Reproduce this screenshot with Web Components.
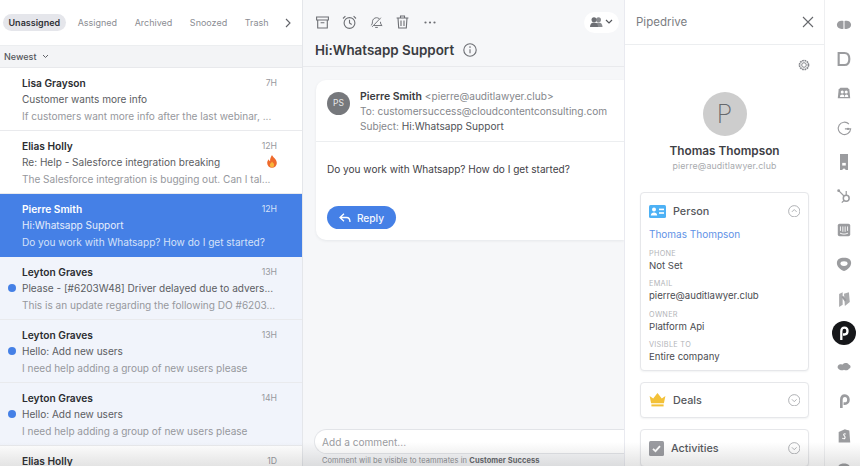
<!DOCTYPE html>
<html>
<head>
<meta charset="utf-8">
<style>
  html, body { margin: 0; height: 100%; overflow: hidden; }
  body { font-family: "Inter", "Liberation Sans", sans-serif; color: #3d3f44; }
</style>
</head>
<body>
<app-shell>
  <conv-list>
    <conv-item name="Lisa Grayson" time="7H" subject="Customer wants more info" preview="If customers want more info after the last webinar, ..."></conv-item>
    <conv-item name="Elias Holly" time="12H" subject="Re: Help - Salesforce integration breaking" preview="The Salesforce integration is bugging out. Can I tal..." fire></conv-item>
    <conv-item name="Pierre Smith" time="12H" subject="Hi:Whatsapp Support" preview="Do you work with Whatsapp? How do I get started?" selected></conv-item>
    <conv-item name="Leyton Graves" time="13H" subject="Please - [#6203W48] Driver delayed due to advers..." preview="This is an update regarding the following DO #6203..." unread></conv-item>
    <conv-item name="Leyton Graves" time="13H" subject="Hello: Add new users" preview="I need help adding a group of new users please" unread></conv-item>
    <conv-item name="Leyton Graves" time="14H" subject="Hello: Add new users" preview="I need help adding a group of new users please" unread></conv-item>
    <conv-item name="Elias Holly" time="1D"></conv-item>
  </conv-list>
  <thread-pane></thread-pane>
  <crm-panel>
    <crm-card title="Person" open>
      <svg slot="icon" width="17" height="13" viewBox="0 0 17 13"><rect width="17" height="13" rx="1.5" fill="#4db1f5"/><circle cx="5" cy="4.6" r="2" fill="#fff"/><path d="M1.8 10.4c0-2 1.4-3 3.2-3s3.2 1 3.2 3z" fill="#fff"/><rect x="10" y="3.6" width="5" height="1.6" fill="#fff"/><rect x="10" y="7.2" width="5" height="1.6" fill="#fff"/></svg>
      <a class="person">Thomas Thompson</a>
      <crm-field label="PHONE">Not Set</crm-field>
      <crm-field label="EMAIL">pierre@auditlawyer.club</crm-field>
      <crm-field label="OWNER">Platform Api</crm-field>
      <crm-field label="VISIBLE TO">Entire company</crm-field>
    </crm-card>
    <crm-card title="Deals" short>
      <svg slot="icon" width="17" height="14" viewBox="0 0 17 14"><path d="M.6 3l3.6 2.6L8.5 0l4.3 5.6L16.4 3l-1.5 7.2H2.1z" fill="#f3c138"/><rect x="2.4" y="11.4" width="12.2" height="2" fill="#f3c138"/></svg>
    </crm-card>
    <crm-card title="Activities">
      <svg slot="icon" width="15" height="15" viewBox="0 0 15 15"><rect width="15" height="15" rx="1.5" fill="#9a9ba0"/><path d="M4 7.8l2.5 2.4L11 5.2" fill="none" stroke="#fff" stroke-width="1.8"/></svg>
    </crm-card>
  </crm-panel>
  <app-rail></app-rail>
</app-shell>

<script>
class AppShell extends HTMLElement {
  constructor() {
    super();
    this.attachShadow({ mode: "open" });
  }
  connectedCallback() {
    this.shadowRoot.innerHTML = `
    <style>
      :host {
        display: grid;
        grid-template-columns: 303px 321px 200px 36px;
        width: 860px;
        height: 466px;
        overflow: hidden;
        position: relative;
        background: #fff;
      }
      #shade {
        position: absolute;
        left: 0;
        right: 0;
        bottom: 0;
        height: 24px;
        pointer-events: none;
        background: linear-gradient(to bottom, rgba(60,60,60,0), rgba(60,60,60,.14));
      }
    </style>
    <slot></slot>
    <div id="shade"></div>
    `;
  }
}

class ConvList extends HTMLElement {
  constructor() {
    super();
    this.attachShadow({ mode: "open" });
  }
  connectedCallback() {
    this.shadowRoot.innerHTML = `
    <style>
      :host {
        display: flex;
        flex-direction: column;
        height: 466px;
        overflow: hidden;
        border-right: 1px solid #e4e6ea;
        box-sizing: border-box;
      }
      #tabs {
        display: flex;
        align-items: center;
        height: 45px;
        flex: none;
        padding: 0 0 0 3px;
        font-size: 9px;
        color: #8b8d93;
        box-sizing: border-box;
      }
      #tabs span { padding: 3px 6px; margin-right: 5.5px; white-space: nowrap; }
      #tabs .on {
        background: #e5e6eb;
        color: #2f3136;
        font-weight: 600;
        border-radius: 9px;
        padding: 3px 5.5px;
        margin-right: 6px;
      }
      #tabs svg { margin: 0 11px 0 auto; }
      #sort {
        display: flex;
        align-items: center;
        gap: 6px;
        height: 23px;
        flex: none;
        padding-left: 4px;
        box-sizing: border-box;
        background: #f3f4f6;
        border-top: 1px solid #eceef0;
        border-bottom: 1px solid #e8e9ec;
        font-size: 9px;
        font-weight: 500;
        color: #55575c;
      }
    </style>
    <div id="tabs">
      <span class="on">Unassigned</span><span>Assigned</span><span>Archived</span><span>Snoozed</span><span>Trash</span>
      <svg width="6" height="10" viewBox="0 0 6 10"><path d="M1 1l4 4-4 4" fill="none" stroke="#606268" stroke-width="1.1"/></svg>
    </div>
    <div id="sort">Newest
      <svg width="7" height="5" viewBox="0 0 7 5"><path d="M1 1l2.5 2.5L6 1" fill="none" stroke="#606268" stroke-width="1"/></svg>
    </div>
    <slot></slot>
    `;
  }
}

class ConvItem extends HTMLElement {
  constructor() {
    super();
    this.attachShadow({ mode: "open" });
  }
  connectedCallback() {
    const fire = this.hasAttribute("fire") ? `
      <svg id="fire" width="12" height="13" viewBox="0 0 12 13"><path d="M6 0c.6 2.3 4.800 3.600 4.800 8A4.800 4.800 0 0 1 1.200 8c0-1.800.8-3 1.800-3.800 0 1.100.4 1.800 1.100 2.100C3.900 4 4.800 1.800 6 0z" fill="#ee6a2c"/><path d="M6 6.500c.4 1.200 2.200 1.600 2.200 3.500a2.200 2.200 0 0 1-4.400 0c0-1.500 1.500-2.100 2.200-3.500z" fill="#f9b43c"/></svg>` : "";
    const subject = this.getAttribute("subject");
    const preview = this.getAttribute("preview");
    this.shadowRoot.innerHTML = `
    <style>
      :host {
        display: block;
        flex: none;
        height: 63px;
        box-sizing: border-box;
        padding: 7px 25px 0 22px;
        background: #fff;
        border-bottom: 1px solid #e9eaed;
        position: relative;
        font-size: 10.05px;
        line-height: 16.3px;
      }
      :host([unread]) { background: #f1f4fb; }
      :host([selected]) { background: #4580e6; border-bottom-color: #4580e6; color: #fff; }
      #top { display: flex; justify-content: space-between; }
      #name { font-size: 10.2px; font-weight: 600; color: #2b2d31; }
      #time { font-size: 8.7px; color: #97999e; }
      #subject { color: #5b5d62; white-space: nowrap; }
      #preview { color: #96989d; white-space: nowrap; }
      :host([selected]) #name { color: #fff; }
      :host([selected]) #time { color: #d5e2f9; }
      :host([selected]) #subject { color: #e6eefc; }
      :host([selected]) #preview { color: #d5e2f9; }
      #dot {
        display: none;
        position: absolute;
        left: 8px;
        top: 27px;
        width: 8px;
        height: 8px;
        border-radius: 50%;
        background: #4580e6;
      }
      :host([unread]) #dot { display: block; }
      #fire { position: absolute; right: 24px; top: 24px; }
    </style>
    <span id="dot"></span>
    <div id="top"><span id="name">${this.getAttribute("name")}</span><span id="time">${this.getAttribute("time")}</span></div>
    ${subject ? `<div id="subject">${subject}</div>` : ""}
    ${preview ? `<div id="preview">${preview}</div>` : ""}
    ${fire}
    `;
  }
}

class ThreadPane extends HTMLElement {
  constructor() {
    super();
    this.attachShadow({ mode: "open" });
  }
  connectedCallback() {
    const s = 'fill="none" stroke="#6d6f74" stroke-width="1.1"';
    this.shadowRoot.innerHTML = `
    <style>
      :host {
        display: flex;
        flex-direction: column;
        height: 466px;
        background: #f6f7f9;
        overflow: hidden;
        box-sizing: border-box;
      }
      header {
        flex: none;
        height: 67px;
        border-bottom: 1px solid #e9eaed;
        box-sizing: border-box;
        padding: 11px 0 0 13px;
      }
      #tools { display: flex; align-items: center; height: 22px; gap: 13px; }
      #dots { margin-left: 1.5px; }
      #assign {
        margin-left: auto;
        width: 35px;
        height: 21px;
        border-radius: 11px;
        background: #fff;
        margin-right: 5px;
        display: flex;
        align-items: center;
        justify-content: center;
        gap: 2px;
      }
      h1 {
        margin: 7px 0 0 -1px;
        font-size: 13.4px;
        font-weight: 600;
        line-height: 20px;
        color: #3a3c41;
        display: flex;
        align-items: center;
        gap: 9px;
      }
      #main { flex: 1; padding: 13px 0 0 13px; min-height: 0; }
      #card {
        background: #fff;
        border-radius: 10px 0 0 10px;
        height: 160px;
        box-shadow: 0 1px 3px rgba(40,50,70,.08);
      }
      #head {
        display: flex;
        height: 62px;
        box-sizing: border-box;
        padding: 9px 0 0 11px;
        border-bottom: 1px solid #eceef0;
        font-size: 10.1px;
        line-height: 15px;
        color: #85878c;
        white-space: nowrap;
      }
      #avatar {
        width: 23px;
        height: 23px;
        margin: 3px 10px 0 0;
        border-radius: 50%;
        background: #76787c;
        color: #e8e8e8;
        font-size: 8.5px;
        display: flex;
        align-items: center;
        justify-content: center;
        flex: none;
      }
      #head b { font-size: 10.5px; font-weight: 600; color: #3a3c41; }
      #head .dk { color: #505257; }
      #body { padding: 20px 0 0 11px; font-size: 10.05px; line-height: 14px; color: #3f4146; height: 44px; }
      #reply {
        margin-left: 11px;
        width: 69px;
        height: 23px;
        border-radius: 12px;
        background: #4580e6;
        color: #f2f6fe;
        font-size: 10.2px;
        font-weight: 500;
        display: flex;
        align-items: center;
        justify-content: center;
        gap: 6px;
      }
      footer { flex: none; padding: 1px 0 0 11px; height: 38px; box-sizing: border-box; }
      #comment {
        height: 25px;
        box-sizing: border-box;
        border: 1px solid #e2e4e8;
        border-right: 0;
        border-radius: 13px 0 0 13px;
        background: #fff;
        padding-left: 7px;
        display: flex;
        align-items: center;
        font-size: 10.1px;
        color: #9a9ca1;
      }
      #note { margin-top: 2px; font-size: 7.5px; letter-spacing: .07px; line-height: 10px; color: #8b8d92; white-space: nowrap; padding-left: 8px; }
      #note b { color: #64666b; }
    </style>
    <header>
      <div id="tools">
        <svg width="13" height="13" viewBox="0 0 13 13"><path d="M.6 1h11.800v3H.6zM1.700 4v8h9.600V4M4.600 6.700h3.800" ${s}/></svg>
        <svg width="15" height="15" viewBox="0 0 15 15"><circle cx="7.500" cy="8" r="5.400" ${s}/><path d="M7.500 4.800V8l2.200 1.500M1 3.500L3.400 1.200M14 3.500L11.600 1.200" ${s}/></svg>
        <svg width="13" height="13" viewBox="0 0 15 14"><path d="M1 10.500c1.400-1 1.800-2.200 1.800-4.300C2.800 3.500 5 1.500 7.500 1.500c1.500 0 2.800.7 3.600 1.800M12.100 6.200c0 2.100.5 3.300 1.900 4.300H4.500M6 12.700h3M12.500 1.500L2.500 12" ${s}/></svg>
        <svg width="13" height="14" viewBox="0 0 13 14"><path d="M.6 3h11.800M4.500 3V1h4v2M2 3l.7 10h7.600L11 3M5 5.500v5.500M8 5.500v5.500" ${s}/></svg>
        <svg id="dots" width="12" height="3" viewBox="0 0 12 3"><circle cx="1.500" cy="1.500" r="1.100" fill="#6d6f74"/><circle cx="6" cy="1.500" r="1.100" fill="#6d6f74"/><circle cx="10.500" cy="1.500" r="1.100" fill="#6d6f74"/></svg>
        <div id="assign">
          <svg width="13" height="10" viewBox="0 0 13 10"><circle cx="8.500" cy="2.800" r="2.500" fill="#8a8c90"/><path d="M4.500 10c0-3 1.700-4.400 4-4.400s4 1.400 4 4.400z" fill="#8a8c90"/><circle cx="4" cy="2.800" r="2.500" fill="#6d6f74"/><path d="M0 10c0-3 1.700-4.400 4-4.400s4 1.400 4 4.400z" fill="#6d6f74"/></svg>
          <svg width="8" height="6" viewBox="0 0 8 6"><path d="M1 1l3 3 3-3" fill="none" stroke="#55575c" stroke-width="1.2"/></svg>
        </div>
      </div>
      <h1>Hi:Whatsapp Support
        <svg width="14" height="14" viewBox="0 0 14 14"><circle cx="7" cy="7" r="6.200" ${s}/><path d="M7 6.200v4" ${s}/><circle cx="7" cy="4.100" r=".8" fill="#6d6f74"/></svg>
      </h1>
    </header>
    <div id="main">
      <div id="card">
        <div id="head">
          <div id="avatar">PS</div>
          <div>
            <div><b>Pierre Smith</b> &lt;pierre@auditlawyer.club&gt;</div>
            <div>To: customersuccess@cloudcontentconsulting.com</div>
            <div>Subject: <span class="dk">Hi:Whatsapp Support</span></div>
          </div>
        </div>
        <div id="body">Do you work with Whatsapp? How do I get started?</div>
        <div id="reply">
          <svg width="12" height="10" viewBox="0 0 12 10"><path d="M5 .8L1 4.500l4 3.700M1 4.500h6.500c2 0 3.500 1.300 3.500 4.500" fill="none" stroke="#fff" stroke-width="1.3"/></svg>
          Reply
        </div>
      </div>
    </div>
    <footer>
      <div id="comment">Add a comment...</div>
      <div id="note">Comment will be visible to teammates in <b>Customer Success</b></div>
    </footer>
    `;
  }
}

class CrmPanel extends HTMLElement {
  constructor() {
    super();
    this.attachShadow({ mode: "open" });
  }
  connectedCallback() {
    this.shadowRoot.innerHTML = `
    <style>
      :host {
        display: block;
        height: 466px;
        overflow: hidden;
        box-sizing: border-box;
        border-left: 1px solid #e9eaf0;
        background: #fff;
      }
      header {
        height: 45px;
        box-sizing: border-box;
        border-bottom: 1px solid #eceef0;
        padding: 0 10px 0 11px;
        display: flex;
        align-items: center;
        justify-content: space-between;
        font-size: 11.5px;
        color: #7b7d82;
      }
      #gear { display: flex; justify-content: flex-end; padding: 14px 14px 0 0; height: 13px; }
      #who { display: flex; flex-direction: column; align-items: center; padding-top: 20px; height: 100px; }
      #pic {
        width: 44px;
        height: 44px;
        border-radius: 50%;
        background: #cdcdcd;
        color: #66686c;
        font-size: 25px;
        font-weight: 200;
        display: flex;
        align-items: center;
        justify-content: center;
      }
      #nm { margin-top: 8px; font-size: 11.8px; font-weight: 600; line-height: 15px; color: #3f4146; }
      #em { font-size: 8.8px; line-height: 14px; letter-spacing: .15px; color: #a8aaae; }
      #cards { padding: 0 15px; display: flex; flex-direction: column; gap: 11px; }
    </style>
    <header>Pipedrive
      <svg width="12" height="12" viewBox="0 0 12 12"><path d="M1 1l10 10M11 1L1 11" fill="none" stroke="#66686c" stroke-width="1.1"/></svg>
    </header>
    <div id="gear">
      <svg width="12" height="12" viewBox="0 0 12 12"><circle cx="6" cy="6" r="4.500" fill="none" stroke="#85878c" stroke-width="1.7" stroke-dasharray="1.7 .65"/><circle cx="6" cy="6" r="2.300" fill="none" stroke="#85878c" stroke-width="1"/></svg>
    </div>
    <div id="who">
      <div id="pic">P</div>
      <div id="nm">Thomas Thompson</div>
      <div id="em">pierre@auditlawyer.club</div>
    </div>
    <div id="cards"><slot></slot></div>
    `;
  }
}

class CrmCard extends HTMLElement {
  constructor() {
    super();
    this.attachShadow({ mode: "open" });
  }
  connectedCallback() {
    const open = this.hasAttribute("open");
    const arrow = open ? "M5 8.800l3-3 3 3" : "M5 6.800l3 3 3-3";
    this.shadowRoot.innerHTML = `
    <style>
      :host {
        display: block;
        box-sizing: border-box;
        border: 1px solid #e6e7ea;
        border-radius: 4px;
        background: #fff;
        box-shadow: 0 1px 2px rgba(40,50,70,.06);
        padding: 0 8px;
      }
      #row {
        display: flex;
        align-items: center;
        height: 36px;
        gap: 7px;
        font-size: 10.8px;
        font-weight: 500;
        color: #55575c;
      }
      :host([short]) #row { height: 34px; }
      #row span { flex: 1; }
      ::slotted(a) { display: block; font-size: 10px; line-height: 14px; color: #5f92e6; margin: -2px 0 6px; }
      #content { padding-bottom: 2px; }
      :host(:not([open])) #content { display: none; }
    </style>
    <div id="row">
      <slot name="icon"></slot>
      <span>${this.getAttribute("title")}</span>
      <svg width="12.5" height="12.5" viewBox="0 0 16 16"><circle cx="8" cy="8" r="7.200" fill="none" stroke="#a3a5a9" stroke-width="1.1"/><path d="${arrow}" fill="none" stroke="#a3a5a9" stroke-width="1.1"/></svg>
    </div>
    <div id="content"><slot></slot></div>
    `;
  }
}

class CrmField extends HTMLElement {
  constructor() {
    super();
    this.attachShadow({ mode: "open" });
  }
  connectedCallback() {
    this.shadowRoot.innerHTML = `
    <style>
      :host { display: block; height: 30.3px; color: #4a4c51; font-size: 9.6px; line-height: 13px; white-space: nowrap; }
      #lbl { font-size: 7.3px; line-height: 10px; letter-spacing: .3px; color: #b3b5b9; padding-top: 2px; }
    </style>
    <div id="lbl">${this.getAttribute("label")}</div>
    <div><slot></slot></div>
    `;
  }
}

class AppRail extends HTMLElement {
  constructor() {
    super();
    this.attachShadow({ mode: "open" });
  }
  connectedCallback() {
    const c = "#9b9c9f";
    const icons = [
      // front, drift, contacts, refresh, bookmark
      `<path d="M8.400 4.500C5 3.300 1 5 1 8.800s4 5.400 7.400 4.300zM9.600 4.500C13 3.300 17 5 17 8.800s-4 5.400-7.400 4.300z" fill="${c}"/>`,
      `<path d="M3 2.200h6.500c3.500 0 5.500 2.800 5.500 6.800s-2 6.800-5.500 6.800H3z" fill="none" stroke="${c}" stroke-width="2.400"/>`,
      `<path d="M3 5l2-2h8l2 2 1 10H2z" fill="${c}"/><circle cx="7" cy="8" r="1.700" fill="#fff"/><circle cx="11.500" cy="8" r="1.700" fill="#fff"/><path d="M4.500 13.500c0-2 1-2.800 2.500-2.800s2.500.8 2.500 2.800zM10 13.500c0-2 .5-2.800 1.800-2.800s2 .8 2 2.800z" fill="#fff"/>`,
      `<path d="M14.500 4.500a7 7 0 1 0 2 5.500H10" fill="none" stroke="${c}" stroke-width="1.2"/><circle cx="13.500" cy="10" r="1.300" fill="${c}"/>`,
      `<path d="M4.500 0h9v20l-4.500-4-4.500 4z" fill="${c}"/><rect x="7" y="10" width="4" height="3" fill="#fff"/>`,
      `<circle cx="11.500" cy="11.500" r="3.300" fill="none" stroke="${c}" stroke-width="1.7"/><path d="M9 9L3 3M11.500 8V3.500M9 14l-2.500 2.500" stroke="${c}" stroke-width="1.4"/><circle cx="3" cy="3" r="1.600" fill="${c}"/>`,
      `<rect x="2" y="2" width="14" height="14" rx="2" fill="${c}"/><path d="M5 5v5M7.700 5v6M10.300 5v6M13 5v5" stroke="#fff"/><path d="M4.500 12.500c3 1.500 6 1.500 9 0" fill="none" stroke="#fff"/>`,
      `<path d="M9 2c5 0 8 2 8 6 0 4-3.500 7.500-8 9-4.500-1.500-8-5-8-9 0-4 3-6 8-6z" fill="${c}"/><ellipse cx="9" cy="8.500" rx="4" ry="2.700" fill="#fff"/>`,
      `<path d="M3.500 3.500l4-2v14l-4 2.500zM9 3l5.500-1.500 1 11L10 17z" fill="${c}" opacity=".85"/><path d="M7 6l4 5" stroke="${c}" stroke-width="2.400"/>`,
      null,
      `<path d="M2 10c-1-3 3-5 5-3.500C9 3.500 14 4 14.500 6.500c2.500.5 2.500 4 0 4.500-1 2-4 2-5.500 1-2 1.500-5.500.5-7-2z" fill="${c}"/>`,
      `<path d="M6 17V8c0-3 1.600-5 4-5s4 2 4 4.500S12.400 12 10 12H8.500" fill="none" stroke="${c}" stroke-width="3"/>`,
      `<path d="M3 5.500l7-3 1.500.5L15 4l1 13.500H3z" fill="${c}"/><path d="M11 8c-2-1-3 .5-2 1.500s2 1.500 1 3-2 .5-3 0" fill="none" stroke="#fff" stroke-width="1.2"/>`,
      `<path d="M3 4c3-3 9-3 12 0v14H3z" fill="${c}"/>`,
    ];
    const html = icons.map(d => d
      ? `<div class="i"><svg width="16" height="16" viewBox="0 0 18 18">${d}</svg></div>`
      : `<div class="i"><div id="pd"><svg width="14" height="15" viewBox="0 0 14 15"><path d="M4.300 15V6.200C4.300 4 5.600 2.600 7.400 2.600S10.500 4 10.500 6s-1.300 3.500-3.100 3.500H6" fill="none" stroke="#fff" stroke-width="2.3"/></svg></div></div>`
    ).join("");
    this.shadowRoot.innerHTML = `
    <style>
      :host {
        display: flex;
        flex-direction: column;
        align-items: center;
        height: 466px;
        overflow: hidden;
        box-sizing: border-box;
        padding: 8px 0 0 3px;
        border-left: 1px solid #eeeff1;
        background: #fff;
      }
      .i { flex: none; height: 34.2px; display: flex; align-items: center; justify-content: center; }
      .i svg { filter: blur(.3px); }
      #pd {
        width: 24px;
        height: 24px;
        border-radius: 50%;
        background: #16171a;
        display: flex;
        align-items: center;
        justify-content: center;
      }
    </style>
    ${html}
    `;
  }
}

customElements.define("app-shell", AppShell);
customElements.define("conv-list", ConvList);
customElements.define("conv-item", ConvItem);
customElements.define("thread-pane", ThreadPane);
customElements.define("crm-panel", CrmPanel);
customElements.define("crm-card", CrmCard);
customElements.define("crm-field", CrmField);
customElements.define("app-rail", AppRail);
</script>
</body>
</html>
